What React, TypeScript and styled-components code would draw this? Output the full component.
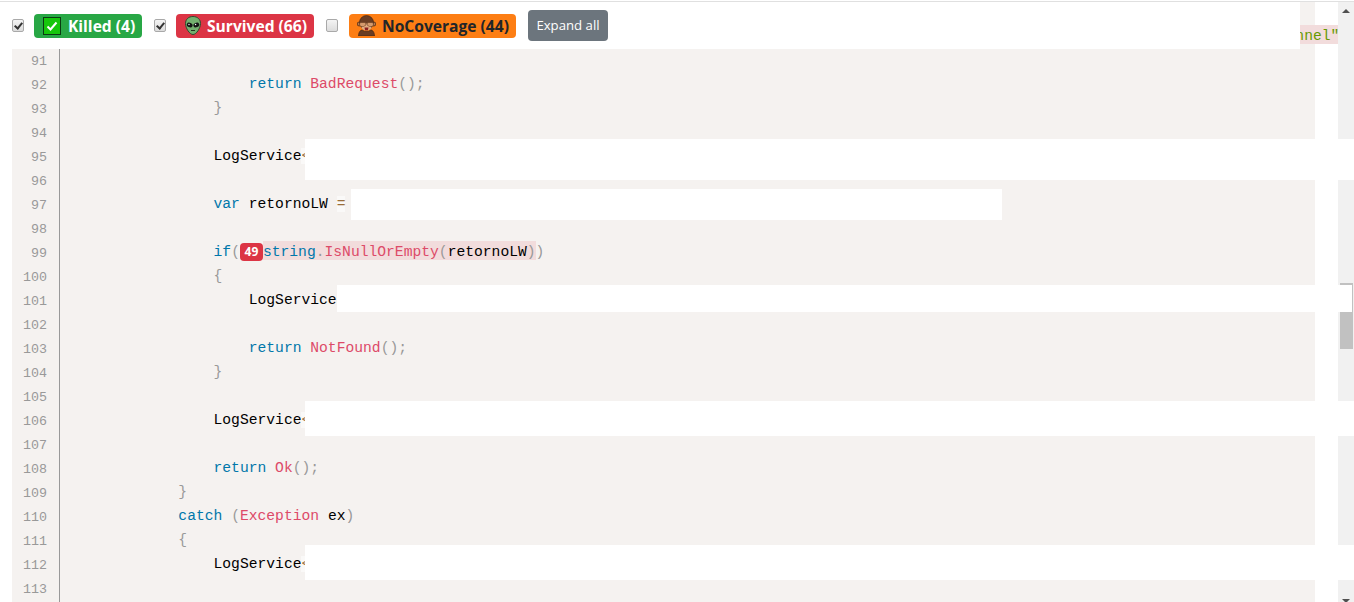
import React from "react";
import styled, { createGlobalStyle } from "styled-components";

const Global = createGlobalStyle`
  html, body { margin: 0; padding: 0; background: #fff; overflow: hidden; }
  #root { width: 1354px; height: 602px; }
`;

const Page = styled.div`
  position: relative;
  width: 1354px;
  height: 602px;
  overflow: hidden;
  background: #fff;
`;
const TopRule = styled.div`
  height: 1px;
  margin-top: 1px;
  background: #e0e0e0;
`;
const Body = styled.div`
  display: flex;
  height: 600px;
`;
const Main = styled.main`
  position: relative;
  flex: 0 0 1338px;
  overflow: hidden;
`;
const CodePanel = styled.div`
  width: 1303px;
  height: 600px;
  margin-left: 12px;
  padding-top: 23px;
  box-sizing: border-box;
  background: #f5f2f0;
  overflow: visible;
`;
const Row = styled.div`
  display: flex;
  height: 24px;
`;
const LineNo = styled.div`
  flex: 0 0 48px;
  box-sizing: border-box;
  padding-right: 12px;
  border-right: 1px solid #999;
  text-align: right;
  font: 13.33px/26px "Liberation Mono", monospace;
  color: #999;
`;
const Code = styled.pre`
  margin: 0;
  padding-left: 12.8px;
  font: 14.667px/22px "Liberation Mono", monospace;
  color: #000;
  white-space: pre;
`;
const tokenColors = {
  keyword: "#0077aa",
  fn: "#dd4a68",
  punct: "#999999",
  op: "#9a6e3a",
  str: "#669900",
};
const Token = styled.span<{ $kind: keyof typeof tokenColors }>`
  color: ${(p) => tokenColors[p.$kind]};
  ${(p) => (p.$kind === "op" ? "background: rgba(255,255,255,.5);" : "")}
`;
const Mutant = styled.span`
  display: inline-block;
  height: 19px;
  line-height: 23px;
  vertical-align: top;
  background: #f2dcdc;
`;
const MutantBadge = styled.span`
  display: inline-block;
  box-sizing: border-box;
  width: 23px;
  height: 18px;
  margin-top: 2px;
  vertical-align: top;
  border-radius: 4px;
  background: #dc3545;
  color: #fff;
  text-align: center;
  font: 700 12px/18px "Open Sans", sans-serif;
`;
const Toolbar = styled.div`
  position: absolute;
  left: 0;
  top: 0;
  display: flex;
  align-items: center;
  box-sizing: border-box;
  width: 1300px;
  height: 47px;
  padding-left: 12px;
  background: #fff;
`;
const Check = styled.input.attrs({ type: "checkbox" })<{ $gap: number }>`
  appearance: none;
  position: relative;
  flex: none;
  box-sizing: border-box;
  width: 12px;
  height: 13px;
  margin: 0 ${(p) => p.$gap}px 0 0;
  border: 1px solid #a9a9a9;
  border-radius: 2px;
  background: linear-gradient(#f4f4f4, #dcdcdc);
  &:checked::after {
    content: "";
    position: absolute;
    left: 3px;
    top: 1px;
    width: 3px;
    height: 6px;
    border: solid #333;
    border-width: 0 2px 2px 0;
    transform: rotate(40deg);
  }
`;
const badgeColors = {
  green: ["#28a745", "#fff"],
  red: ["#dc3545", "#fff"],
  orange: ["#fd7e14", "#212529"],
} as const;
const Badge = styled.span<{
  $tone: keyof typeof badgeColors;
  $w: number;
  $pad: number;
  $gap: number;
}>`
  display: flex;
  align-items: center;
  flex: none;
  box-sizing: border-box;
  gap: ${(p) => p.$gap}px;
  width: ${(p) => p.$w}px;
  height: 24px;
  margin-right: 12px;
  padding-left: ${(p) => p.$pad}px;
  border-radius: 4px;
  background: ${(p) => badgeColors[p.$tone][0]};
  color: ${(p) => badgeColors[p.$tone][1]};
  font: 700 15.6px/24px "Open Sans", sans-serif;
  white-space: nowrap;
`;
const ExpandButton = styled.button`
  flex: none;
  width: 80px;
  height: 31px;
  margin-top: -1px;
  padding: 0;
  border: 0;
  border-radius: 4px;
  background: #6c757d;
  color: #fff;
  font: 13.2px/31px "Open Sans", sans-serif;
`;
const Redaction = styled.div<{ $x: number; $y: number; $w: number; $h: number }>`
  position: absolute;
  left: ${(p) => p.$x}px;
  top: ${(p) => p.$y}px;
  width: ${(p) => p.$w}px;
  height: ${(p) => p.$h}px;
  background: #fff;
`;
const Scrollbar = styled.aside`
  display: flex;
  flex-direction: column;
  align-items: center;
  flex: 0 0 16px;
  height: 600px;
  background: #f1f1f1;
`;
const ArrowUp = styled.div`
  width: 0;
  height: 0;
  margin-top: 7px;
  border: 4px solid transparent;
  border-top: 0;
  border-bottom-color: #505050;
`;
const Thumb = styled.div`
  width: 13px;
  height: 66px;
  margin: 270px 0 0 1px;
  background: #c1c1c1;
`;
const ArrowDown = styled.div`
  width: 0;
  height: 0;
  margin-top: auto;
  margin-bottom: -1px;
  border: 4px solid transparent;
  border-bottom: 0;
  border-top-color: #505050;
`;

const CheckIcon = () => (
  <svg width="18" height="18" viewBox="0 0 18 18">
    <rect x=".5" y=".5" width="17" height="17" fill="#16c60c" stroke="#0a3a12" />
    <path d="M4.500 9.500l3 3 6-7" fill="none" stroke="#fff" strokeWidth="2" />
  </svg>
);
const AlienIcon = () => (
  <svg width="16" height="19" viewBox="0 0 16 19">
    <path d="M8 .5C3.300.5.500 3.600.500 7.500c0 4.800 4.200 11 7.500 11s7.500-6.200 7.500-11C15.500 3.600 12.700.5 8 .5z" fill="#74b06f" stroke="#2f4a2d" />
    <ellipse cx="4.700" cy="9" rx="3" ry="2.300" fill="#141414" transform="rotate(25 4.700 9)" />
    <ellipse cx="11.300" cy="9" rx="3" ry="2.300" fill="#141414" transform="rotate(-25 11.300 9)" />
    <circle cx="4" cy="8.500" r=".7" fill="#fff" />
    <circle cx="10.600" cy="8.500" r=".7" fill="#fff" />
    <path d="M6 14.500h4" stroke="#24381f" />
  </svg>
);
const MonkeyIcon = () => (
  <svg width="19" height="21" viewBox="0 0 19 21">
    <circle cx="2.200" cy="9" r="2" fill="#b9794b" stroke="#3c2112" strokeWidth=".7" />
    <circle cx="16.800" cy="9" r="2" fill="#b9794b" stroke="#3c2112" strokeWidth=".7" />
    <ellipse cx="9.500" cy="7.500" rx="7" ry="7" fill="#6b3d22" stroke="#3c2112" strokeWidth=".6" />
    <ellipse cx="9.500" cy="12" rx="5" ry="3.600" fill="#e2ac80" />
    <path d="M3 7.500h5.500l.5 2.500-2.500 1.500H4L2.500 10zM16 7.500h-5.500L10 10l2.500 1.500H15l1.500-1.500z" fill="#d59a6c" stroke="#5b3219" strokeWidth=".5" />
    <path d="M7.500 12.500h4l-.6 2.800H8.100z" fill="#8c2020" />
    <path d="M1.500 21c0-3.600 1.800-6 3.500-6l2.500 1.200h4L14 15c1.700 0 3.500 2.400 3.500 6z" fill="#6b3d22" stroke="#3c2112" strokeWidth=".6" />
  </svg>
);

type Part = string | [keyof typeof tokenColors, string];
const K = (s: string): Part => ["keyword", s];
const F = (s: string): Part => ["fn", s];
const P = (s: string): Part => ["punct", s];
const O = (s: string): Part => ["op", s];
const pad = (n: number) => " ".repeat(n);

const renderParts = (parts: Part[]) =>
  parts.map((part, i) =>
    typeof part === "string" ? part : <Token key={i} $kind={part[0]}>{part[1]}</Token>
  );

const survivedString = '"Nao foi possivel localizar o registro solicitado para o channel"';
const survivedPad = pad(144 - survivedString.length);

const lines: Record<number, React.ReactNode> = {
  90: <>{survivedPad}<Mutant><Token $kind="str">{survivedString}</Token></Mutant></>,
  91: null,
  92: renderParts([pad(20), K("return"), " ", F("BadRequest"), P("();")]),
  93: renderParts([pad(16), P("}")]),
  94: null,
  95: renderParts([pad(16), "LogService", O("<")]),
  96: null,
  97: renderParts([pad(16), K("var"), " retornoLW ", O("=")]),
  98: null,
  99: (
    <>
      {renderParts([pad(16), K("if"), P("(")])}
      <MutantBadge>49</MutantBadge>
      <Mutant>
        {renderParts([K("string"), P("."), F("IsNullOrEmpty"), P("("), "retornoLW", P(")")])}
      </Mutant>
      <Token $kind="punct">)</Token>
    </>
  ),
  100: renderParts([pad(16), P("{")]),
  101: renderParts([pad(20), "LogService"]),
  102: null,
  103: renderParts([pad(20), K("return"), " ", F("NotFound"), P("();")]),
  104: renderParts([pad(16), P("}")]),
  105: null,
  106: renderParts([pad(16), "LogService", O("<")]),
  107: null,
  108: renderParts([pad(16), K("return"), " ", F("Ok"), P("();")]),
  109: renderParts([pad(12), P("}")]),
  110: renderParts([pad(12), K("catch"), " ", P("("), F("Exception"), " ex", P(")")]),
  111: renderParts([pad(12), P("{")]),
  112: renderParts([pad(16), "LogService", O("<")]),
  113: null,
};

const redactions = [
  { x: 305, y: 139, w: 1049, h: 41 },
  { x: 351, y: 189, w: 651, h: 31 },
  { x: 337, y: 285, w: 1015, h: 27 },
  { x: 305, y: 401, w: 1049, h: 35 },
  { x: 305, y: 545, w: 1049, h: 35 },
];

export default function App() {
  return (
    <Page>
      <Global />
      <TopRule />
      <Body>
        <Main>
          <CodePanel>
            {Object.entries(lines).map(([n, content]) => (
              <Row key={n}>
                <LineNo>{n}</LineNo>
                <Code>{content}</Code>
              </Row>
            ))}
            <Row>
              <LineNo />
            </Row>
          </CodePanel>
          <Toolbar>
            <Check $gap={10} defaultChecked />
            <Badge $tone="green" $w={108} $pad={9} $gap={7}>
              <CheckIcon />
              Killed (4)
            </Badge>
            <Check $gap={10} defaultChecked />
            <Badge $tone="red" $w={138} $pad={9} $gap={6}>
              <AlienIcon />
              Survived (66)
            </Badge>
            <Check $gap={11} />
            <Badge $tone="orange" $w={167} $pad={8} $gap={6}>
              <MonkeyIcon />
              NoCoverage (44)
            </Badge>
            <ExpandButton>Expand all</ExpandButton>
          </Toolbar>
        </Main>
        <Scrollbar>
          <ArrowUp />
          <Thumb />
          <ArrowDown />
        </Scrollbar>
      </Body>
      {redactions.map((r) => (
        <Redaction key={r.y} $x={r.x} $y={r.y} $w={r.w} $h={r.h} />
      ))}
    </Page>
  );
}
